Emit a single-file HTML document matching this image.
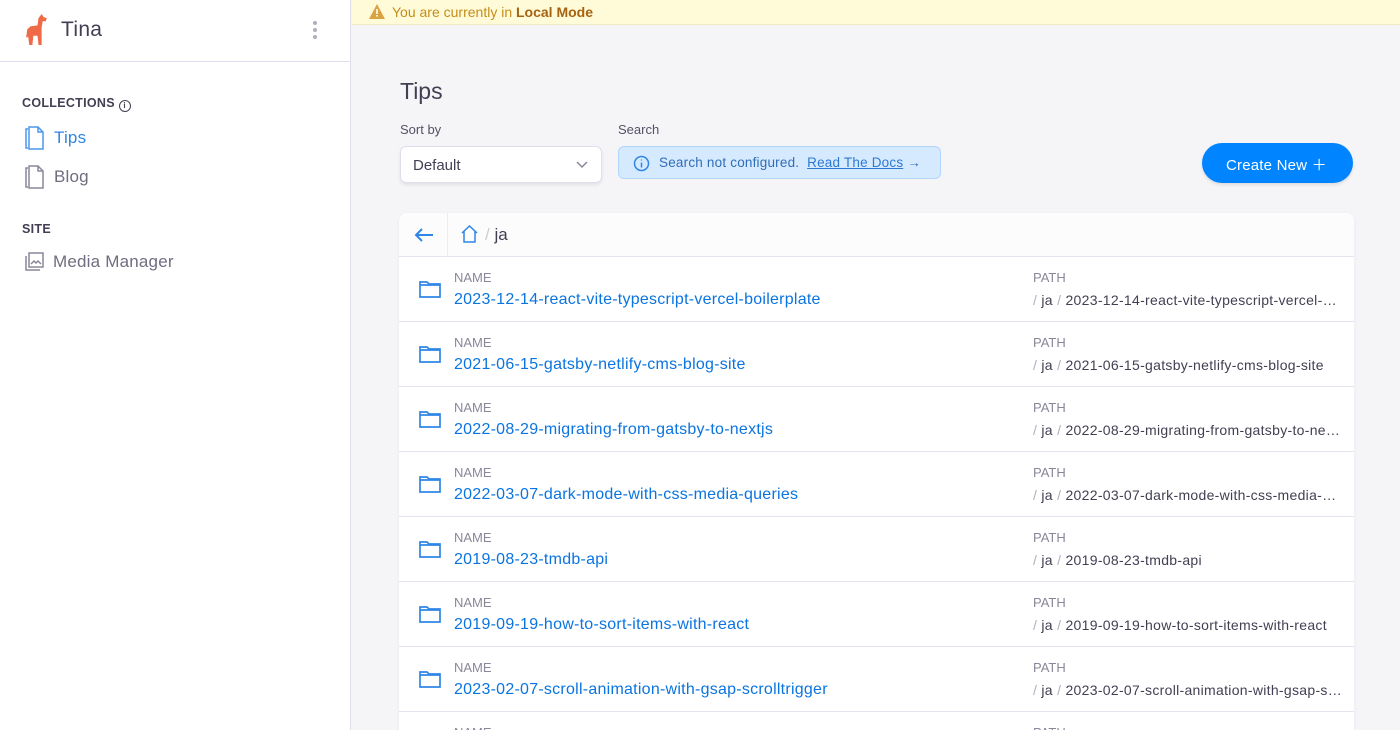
<!DOCTYPE html>
<html style="height:730px;overflow:hidden"><head><meta charset="utf-8"><style>
*{box-sizing:border-box;margin:0;padding:0}
body{width:1400px;height:730px;overflow:hidden;font-family:"Liberation Sans",sans-serif;background:#f5f5f8;position:relative}
.side{position:absolute;left:0;top:0;width:351px;height:730px;background:#fff;border-right:1px solid #e1ddec}
.logo{height:62px;border-bottom:1px solid #e1ddec;position:relative}
.logo .t{position:absolute;left:61px;top:18px;font-size:21px;color:#433e52;letter-spacing:.3px}
.dots{position:absolute;left:313px;top:21px}
.dots i{display:block;width:4px;height:4px;border-radius:2px;background:#b2adbe;margin-bottom:3px}
.h{position:absolute;left:22px;font-size:12.5px;font-weight:bold;color:#433e52;letter-spacing:.3px}
.it{position:absolute;left:24px;font-size:17px;color:#716c7f;display:flex;align-items:center;letter-spacing:.2px}
.it svg{margin-right:9px}
.banner{position:absolute;left:352px;top:0;right:0;height:25px;background:#fffbd9;border-bottom:1px solid #efe9c4;font-size:14px;color:#c58d18;padding:4px 0 0 40px}
.banner b{color:#a7630f}
.main{position:absolute;left:352px;top:26px;right:0;height:704px;overflow:hidden}
h1{position:absolute;left:48px;top:52px;font-size:23px;font-weight:normal;color:#433e52}
.lbl{position:absolute;font-size:13px;color:#565165}
.sel{position:absolute;left:48px;top:120px;width:202px;height:37px;background:#fff;border:1px solid #e1ddec;border-radius:6px;box-shadow:0 2px 3px rgba(0,0,0,.08);font-size:15px;color:#433e52;padding:10px 12px}
.srch{position:absolute;left:266px;top:120px;width:323px;height:33px;background:#d6eaff;border:1px solid #b2d6fb;border-radius:6px;font-size:13.5px;color:#2f6db8;padding:8px 0 0 40px;letter-spacing:.2px}
.srch u{color:#2c79d4}
.btn{position:absolute;left:850px;top:117px;width:151px;height:40px;border-radius:20px;background:#0084ff;color:#fff;font-size:15px;padding:11px 0 0 24px;box-shadow:0 2px 3px rgba(0,0,0,.1);letter-spacing:.2px}
.tbl{position:absolute;left:47px;top:187px;width:955px;height:517px;overflow:hidden;background:#fff;border-radius:8px 8px 0 0;box-shadow:0 1px 3px rgba(0,0,0,.06)}
.bar{height:44px;background:#fcfcfd;border-bottom:1px solid #e6e3ee;position:relative;border-radius:8px 8px 0 0}
.row{height:65px;border-bottom:1px solid #e6e3ee;position:relative}
.row .n1{position:absolute;left:55px;top:13px;font-size:13px;color:#8b8699}
.row .n2{position:absolute;left:55px;top:34px;font-size:16px;color:#0a74e0;white-space:nowrap;letter-spacing:.25px}
.row .p1{position:absolute;left:634px;top:13px;font-size:13px;color:#8b8699}
.row .p2{position:absolute;left:634px;top:35px;font-size:14px;color:#433e52;white-space:nowrap;width:310px;overflow:hidden;text-overflow:ellipsis;letter-spacing:.3px}
.row .p2 span{color:#b2adbe}
.row svg{position:absolute;left:20px;top:23px}
</style></head><body>
<div class="side">
 <div class="logo">
  <svg style="position:absolute;left:25px;top:13px" width="25" height="33" viewBox="0 0 24 32"><path d="M16 1l2 3 3 1-1 3h-3l-1 6 0 17h-3l-1-9-4 0-1 9h-3l-1-8-2 1 1-8 3-3 7-1 1-7z" fill="#ef6a46"/></svg>
  <span class="t">Tina</span>
  <div class="dots"><i></i><i></i><i></i></div>
 </div>
 <div class="h" style="top:96px">COLLECTIONS <span style="display:inline-block;width:12px;height:12px;border:1.3px solid #433e52;border-radius:50%;font-size:8px;text-align:center;line-height:10px;vertical-align:-1px">i</span></div>
 <div class="it" style="top:126px;color:#2f86e6"><svg width="21" height="24" viewBox="0 0 21 24" fill="none" stroke="#4a97ec" stroke-width="1.5"><path d="M4 3H2v19h2"/><path d="M5 1h9l5 5v17H5z"/><path d="M14 1v5h5"/></svg>Tips</div>
 <div class="it" style="top:165px"><svg width="21" height="24" viewBox="0 0 21 24" fill="none" stroke="#8b8699" stroke-width="1.5"><path d="M4 3H2v19h2"/><path d="M5 1h9l5 5v17H5z"/><path d="M14 1v5h5"/></svg>Blog</div>
 <div class="h" style="top:222px">SITE</div>
 <div class="it" style="top:252px"><svg width="20" height="20" viewBox="0 0 20 20" fill="none" stroke="#8b8699" stroke-width="1.5"><path d="M2 4v14h14"/><rect x="5" y="1" width="14" height="14"/><path d="M7 12l3-3 2 2 2-2 3 3" /></svg>Media Manager</div>
</div>
<div class="banner"><svg style="position:absolute;left:17px;top:4px" width="16" height="15" viewBox="0 0 16 15"><path d="M8 0l8 15H0z" fill="#d9a341"/><rect x="7.2" y="5" width="1.6" height="5" fill="#fff"/><rect x="7.2" y="11" width="1.6" height="1.6" fill="#fff"/></svg>You are currently in <b>Local Mode</b></div>
<div class="main">
 <h1>Tips</h1>
 <div class="lbl" style="left:48px;top:96px">Sort by</div>
 <div class="lbl" style="left:266px;top:96px">Search</div>
 <div class="sel">Default<svg style="position:absolute;right:13px;top:14px" width="12" height="8" viewBox="0 0 12 8"><path d="M1 1l5 5 5-5" fill="none" stroke="#8b8699" stroke-width="1.5"/></svg></div>
 <div class="srch"><svg style="position:absolute;left:14px;top:8px" width="17" height="17" viewBox="0 0 17 17" fill="none" stroke="#2f86e6" stroke-width="1.5"><circle cx="8.5" cy="8.5" r="7"/><path d="M8.5 7.5v5M8.5 4.5v1"/></svg>Search not configured.&nbsp; <u>Read The Docs</u> →</div>
 <div class="btn">Create New ＋</div>
 <div class="tbl">
  <div class="bar">
   <svg style="position:absolute;left:15px;top:14px" width="20" height="16" viewBox="0 0 20 16" fill="none" stroke="#2f86e6" stroke-width="2"><path d="M19 8H2M8 2L2 8l6 6"/></svg>
   <div style="position:absolute;left:48px;top:0;width:1px;height:44px;background:#eeecf3"></div>
   <svg style="position:absolute;left:61px;top:12px" width="19" height="18" viewBox="0 0 19 18" fill="none" stroke="#2f86e6" stroke-width="1.5"><path d="M2 8L9.5 1 17 8M4 6v11h11V6"/></svg>
   <span style="position:absolute;left:86px;top:12px;font-size:17px;color:#433e52"><span style="color:#ccc">/</span> ja</span>
  </div>
  <div class="row"><svg width="22" height="18" viewBox="0 0 22 18" fill="none" stroke="#2f86e6" stroke-width="1.7"><path d="M1 2h7l2 2h11v13H1z"/><path d="M1 5h20"/></svg><div class="n1">NAME</div><div class="n2">2023-12-14-react-vite-typescript-vercel-boilerplate</div><div class="p1">PATH</div><div class="p2"><span>/ </span>ja<span> / </span>2023-12-14-react-vite-typescript-vercel-boilerplate</div></div>
  <div class="row"><svg width="22" height="18" viewBox="0 0 22 18" fill="none" stroke="#2f86e6" stroke-width="1.7"><path d="M1 2h7l2 2h11v13H1z"/><path d="M1 5h20"/></svg><div class="n1">NAME</div><div class="n2">2021-06-15-gatsby-netlify-cms-blog-site</div><div class="p1">PATH</div><div class="p2"><span>/ </span>ja<span> / </span>2021-06-15-gatsby-netlify-cms-blog-site</div></div>
  <div class="row"><svg width="22" height="18" viewBox="0 0 22 18" fill="none" stroke="#2f86e6" stroke-width="1.7"><path d="M1 2h7l2 2h11v13H1z"/><path d="M1 5h20"/></svg><div class="n1">NAME</div><div class="n2">2022-08-29-migrating-from-gatsby-to-nextjs</div><div class="p1">PATH</div><div class="p2"><span>/ </span>ja<span> / </span>2022-08-29-migrating-from-gatsby-to-nextjs</div></div>
  <div class="row"><svg width="22" height="18" viewBox="0 0 22 18" fill="none" stroke="#2f86e6" stroke-width="1.7"><path d="M1 2h7l2 2h11v13H1z"/><path d="M1 5h20"/></svg><div class="n1">NAME</div><div class="n2">2022-03-07-dark-mode-with-css-media-queries</div><div class="p1">PATH</div><div class="p2"><span>/ </span>ja<span> / </span>2022-03-07-dark-mode-with-css-media-queries</div></div>
  <div class="row"><svg width="22" height="18" viewBox="0 0 22 18" fill="none" stroke="#2f86e6" stroke-width="1.7"><path d="M1 2h7l2 2h11v13H1z"/><path d="M1 5h20"/></svg><div class="n1">NAME</div><div class="n2">2019-08-23-tmdb-api</div><div class="p1">PATH</div><div class="p2"><span>/ </span>ja<span> / </span>2019-08-23-tmdb-api</div></div>
  <div class="row"><svg width="22" height="18" viewBox="0 0 22 18" fill="none" stroke="#2f86e6" stroke-width="1.7"><path d="M1 2h7l2 2h11v13H1z"/><path d="M1 5h20"/></svg><div class="n1">NAME</div><div class="n2">2019-09-19-how-to-sort-items-with-react</div><div class="p1">PATH</div><div class="p2"><span>/ </span>ja<span> / </span>2019-09-19-how-to-sort-items-with-react</div></div>
  <div class="row"><svg width="22" height="18" viewBox="0 0 22 18" fill="none" stroke="#2f86e6" stroke-width="1.7"><path d="M1 2h7l2 2h11v13H1z"/><path d="M1 5h20"/></svg><div class="n1">NAME</div><div class="n2">2023-02-07-scroll-animation-with-gsap-scrolltrigger</div><div class="p1">PATH</div><div class="p2"><span>/ </span>ja<span> / </span>2023-02-07-scroll-animation-with-gsap-scrolltrigger</div></div>
  <div class="row"><div class="n1">NAME</div><div class="p1">PATH</div></div>
 </div>
</div>
</body></html>
